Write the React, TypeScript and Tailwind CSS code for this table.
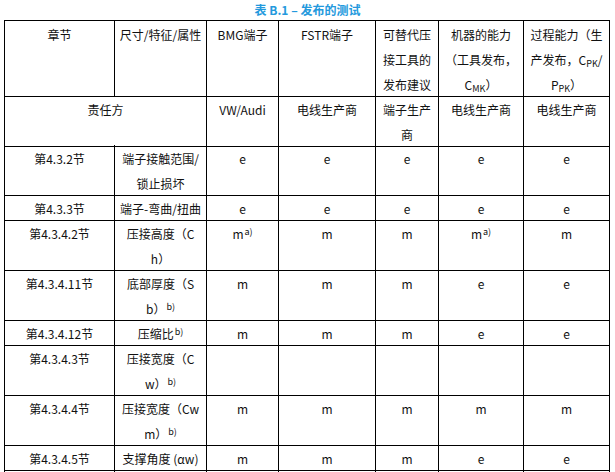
import React from "react";

const Sup = ({ children }: { children: React.ReactNode }) => (
  <sup className="text-[9px] ml-[1px]">{children}</sup>
);
const Sub = ({ children }: { children: React.ReactNode }) => (
  <sub className="text-[9px]">{children}</sub>
);

type Cell = { lines: React.ReactNode[]; span?: number };

const c = (...lines: React.ReactNode[]): Cell => ({ lines });

const rows: { h: string; cells: Cell[] }[] = [
  {
    h: "h-[75px]",
    cells: [
      c("章节"),
      c("尺寸/特征/属性"),
      c("BMG端子"),
      c("FSTR端子"),
      c("可替代压", "接工具的", "发布建议"),
      c("机器的能力", "（工具发布，", <>C<Sub>MK</Sub>）</>),
      c("过程能力（生", <>产发布，C<Sub>PK</Sub>/</>, <>P<Sub>PK</Sub>）</>),
    ],
  },
  {
    h: "h-[49px]",
    cells: [
      { lines: ["责任方"], span: 2 },
      c("VW/Audi"),
      c("电线生产商"),
      c("端子生产", "商"),
      c("电线生产商"),
      c("电线生产商"),
    ],
  },
  {
    h: "h-[50px]",
    cells: [c("第4.3.2节"), c("端子接触范围/", "锁止损坏"), c("e"), c("e"), c("e"), c("e"), c("e")],
  },
  {
    h: "h-[25px]",
    cells: [c("第4.3.3节"), c("端子-弯曲/扭曲"), c("e"), c("e"), c("e"), c("e"), c("e")],
  },
  {
    h: "h-[50px]",
    cells: [
      c("第4.3.4.2节"),
      c("压接高度（C", "h）"),
      c(<>m<Sup>a)</Sup></>),
      c("m"),
      c("m"),
      c(<>m<Sup>a)</Sup></>),
      c("m"),
    ],
  },
  {
    h: "h-[50px]",
    cells: [
      c("第4.3.4.11节"),
      c("底部厚度（S", <>b）<Sup>b)</Sup></>),
      c("m"),
      c("m"),
      c("m"),
      c("e"),
      c("e"),
    ],
  },
  {
    h: "h-[25px]",
    cells: [c("第4.3.4.12节"), c(<>压缩比<Sup>b)</Sup></>), c("m"), c("m"), c("m"), c("e"), c("e")],
  },
  {
    h: "h-[50px]",
    cells: [c("第4.3.4.3节"), c("压接宽度（C", <>w）<Sup>b)</Sup></>), c(""), c(""), c(""), c(""), c("")],
  },
  {
    h: "h-[50px]",
    cells: [
      c("第4.3.4.4节"),
      c("压接宽度（Cw", <>m）<Sup>b)</Sup></>),
      c("m"),
      c("m"),
      c("m"),
      c("m"),
      c("m"),
    ],
  },
  {
    h: "h-[25px]",
    cells: [c("第4.3.4.5节"), c("支撑角度 (αw)"), c("m"), c("m"), c("m"), c("e"), c("e")],
  },
  {
    h: "h-[50px]",
    cells: [c(), c(), c(), c(), c(), c(), c()],
  },
];

export default function App() {
  return (
    <div
      className="w-[615px] h-[472px] overflow-hidden bg-white text-[#111]"
      style={{ fontFamily: '"Noto Sans CJK SC", "Noto Sans", sans-serif' }}
    >
      <div className="h-[20px] leading-[20px] text-center text-[12px] font-bold text-[#2399dd]">
        表 B.1 – 发布的测试
      </div>
      <div className="ml-[4px] w-[606px] border-l border-t border-black">
        {rows.map((r, i) => (
          <div
            key={i}
            className={`grid grid-cols-[110px_92px_72px_97px_63px_85px_86px] ${r.h}`}
          >
            {r.cells.map((cell, j) => (
              <div
                key={j}
                className={`border-r border-b border-black text-center text-[12px] whitespace-nowrap ${
                  cell.span === 2 ? "col-span-2" : ""
                }`}
              >
                {cell.lines.map((l, k) => (
                  <div key={k} className="h-[25px] pt-[4px] leading-[20px]">
                    {l}
                  </div>
                ))}
              </div>
            ))}
          </div>
        ))}
      </div>
    </div>
  );
}
